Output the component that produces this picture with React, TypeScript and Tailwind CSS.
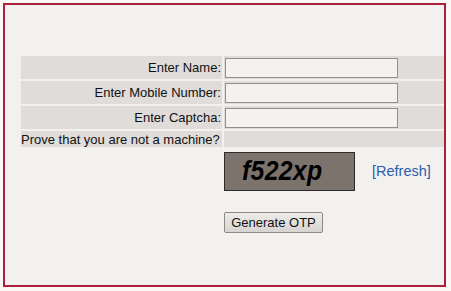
import React from "react";

const font = { fontFamily: '"Liberation Sans", Arial, sans-serif' };

function InputRow({ label }: { label: string }) {
  return (
    <div className="flex gap-[2px] h-[23px]">
      <div className="w-[201px] bg-[#dfdcd9] flex items-center justify-end pr-[1px] text-[13px] text-[#111]">
        {label}
      </div>
      <div className="flex-1 bg-[#dfdcd9] flex items-center pl-[1px]">
        <input
          type="text"
          className="w-[173px] h-[20px] border border-[#928f8c] bg-[#f4f2f0] outline-none"
        />
      </div>
    </div>
  );
}

export default function App() {
  return (
    <div className="w-[451px] h-[291px] bg-[#fbf7f7] pt-[3px] pl-[3px]" style={font}>
      <div className="w-[443px] h-[284px] border-2 border-[#a8203a] bg-[#f3f1ef] pl-[16px] pt-[51px]">
        <div className="w-[423px] flex flex-col gap-[2px]">
          <InputRow label="Enter Name:" />
          <InputRow label="Enter Mobile Number:" />
          <InputRow label="Enter Captcha:" />
          <div className="flex gap-[2px] h-[16px]">
            <div className="w-[201px] bg-[#dfdcd9] flex items-center text-[13px] text-[#111] whitespace-nowrap leading-none">
              Prove that you are not a machine?
            </div>
            <div className="flex-1 bg-[#dfdcd9]" />
          </div>
          <div className="flex h-[44px] items-center">
            <div className="w-[203px]" />
            <div className="w-[131px] h-[39px] bg-[#7c736d] border border-[#2e2a28] flex items-center pl-[17px]">
              <span className="text-[27px] font-bold italic text-black leading-none tracking-[0.3px] inline-block scale-x-[0.92] origin-left">
                f522xp
              </span>
            </div>
            <a className="ml-[17px] text-[14.5px] text-[#2d5ea8] leading-none" href="#">
              [Refresh]
            </a>
          </div>
        </div>
        <div className="flex mt-[19px]">
          <div className="w-[203px]" />
          <button className="w-[99px] h-[21px] border border-[#8c8986] rounded-[2px] bg-gradient-to-b from-[#eeece9] to-[#d6d3d0] text-[13px] text-[#111] leading-none">
            Generate OTP
          </button>
        </div>
      </div>
    </div>
  );
}
